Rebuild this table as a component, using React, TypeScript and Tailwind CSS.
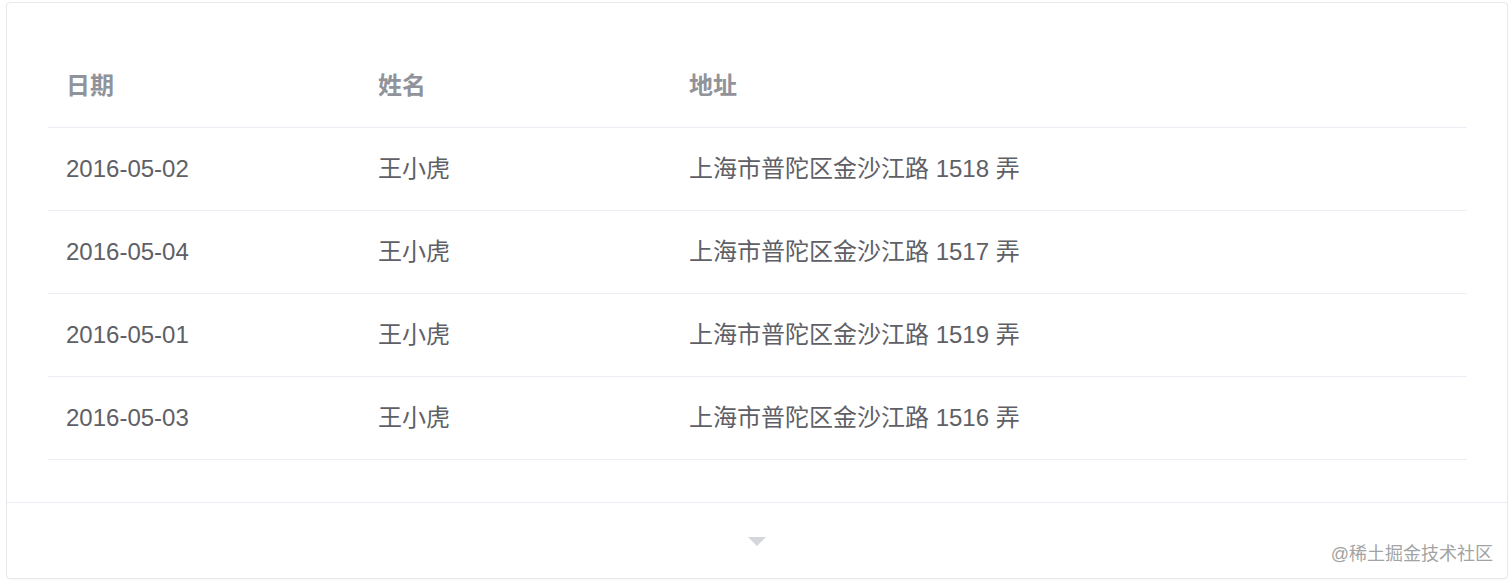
const rows = [
  { date: '2016-05-02', name: '王小虎', address: '上海市普陀区金沙江路 1518 弄' },
  { date: '2016-05-04', name: '王小虎', address: '上海市普陀区金沙江路 1517 弄' },
  { date: '2016-05-01', name: '王小虎', address: '上海市普陀区金沙江路 1519 弄' },
  { date: '2016-05-03', name: '王小虎', address: '上海市普陀区金沙江路 1516 弄' },
];

export default function App() {
  return (
    <div
      className="w-[1512px] h-[583px] bg-white pt-[2px] pl-[6px] pr-[4px]"
      style={{ fontFamily: '"Liberation Sans", "Noto Sans CJK SC", sans-serif' }}
    >
      <div className="relative h-[577px] rounded-[4px] border border-[#e6e8ec] bg-white shadow-[0_1px_2px_rgba(0,0,0,0.03)] flex flex-col">
        {/* table */}
        <div className="pt-[42px] pl-[41px] pr-[40px] pb-[42px]">
          <table className="w-full border-collapse table-fixed">
            <thead>
              <tr className="border-b border-[#ebeef5]">
                <th className="w-[312px] h-[82px] pl-[18px] text-left align-middle text-[24px] font-semibold text-[#909399]">日期</th>
                <th className="w-[311px] h-[82px] pl-[18px] text-left align-middle text-[24px] font-semibold text-[#909399]">姓名</th>
                <th className="h-[82px] pl-[18px] text-left align-middle text-[24px] font-semibold text-[#909399]">地址</th>
              </tr>
            </thead>
            <tbody>
              {rows.map((r) => (
                <tr key={r.date} className="border-b border-[#ebeef5]">
                  <td className="h-[83px] pl-[18px] align-middle text-[24px] text-[#5e6066]">{r.date}</td>
                  <td className="h-[83px] pl-[18px] align-middle text-[24px] text-[#5e6066]">{r.name}</td>
                  <td className="h-[83px] pl-[18px] align-middle text-[24px] text-[#5e6066]">{r.address}</td>
                </tr>
              ))}
            </tbody>
          </table>
        </div>
        {/* footer */}
        <div className="flex-1 border-t border-[#ebeef5] flex items-center justify-center">
          <div className="w-0 h-0 mt-[3px] border-l-[9px] border-r-[9px] border-t-[9px] border-l-transparent border-r-transparent border-t-[#d3d6db]" />
        </div>
        <div className="absolute right-[14px] bottom-[13px] text-[18px] leading-[22px] text-[#a3a3a3]">@稀土掘金技术社区</div>
      </div>
    </div>
  );
}
